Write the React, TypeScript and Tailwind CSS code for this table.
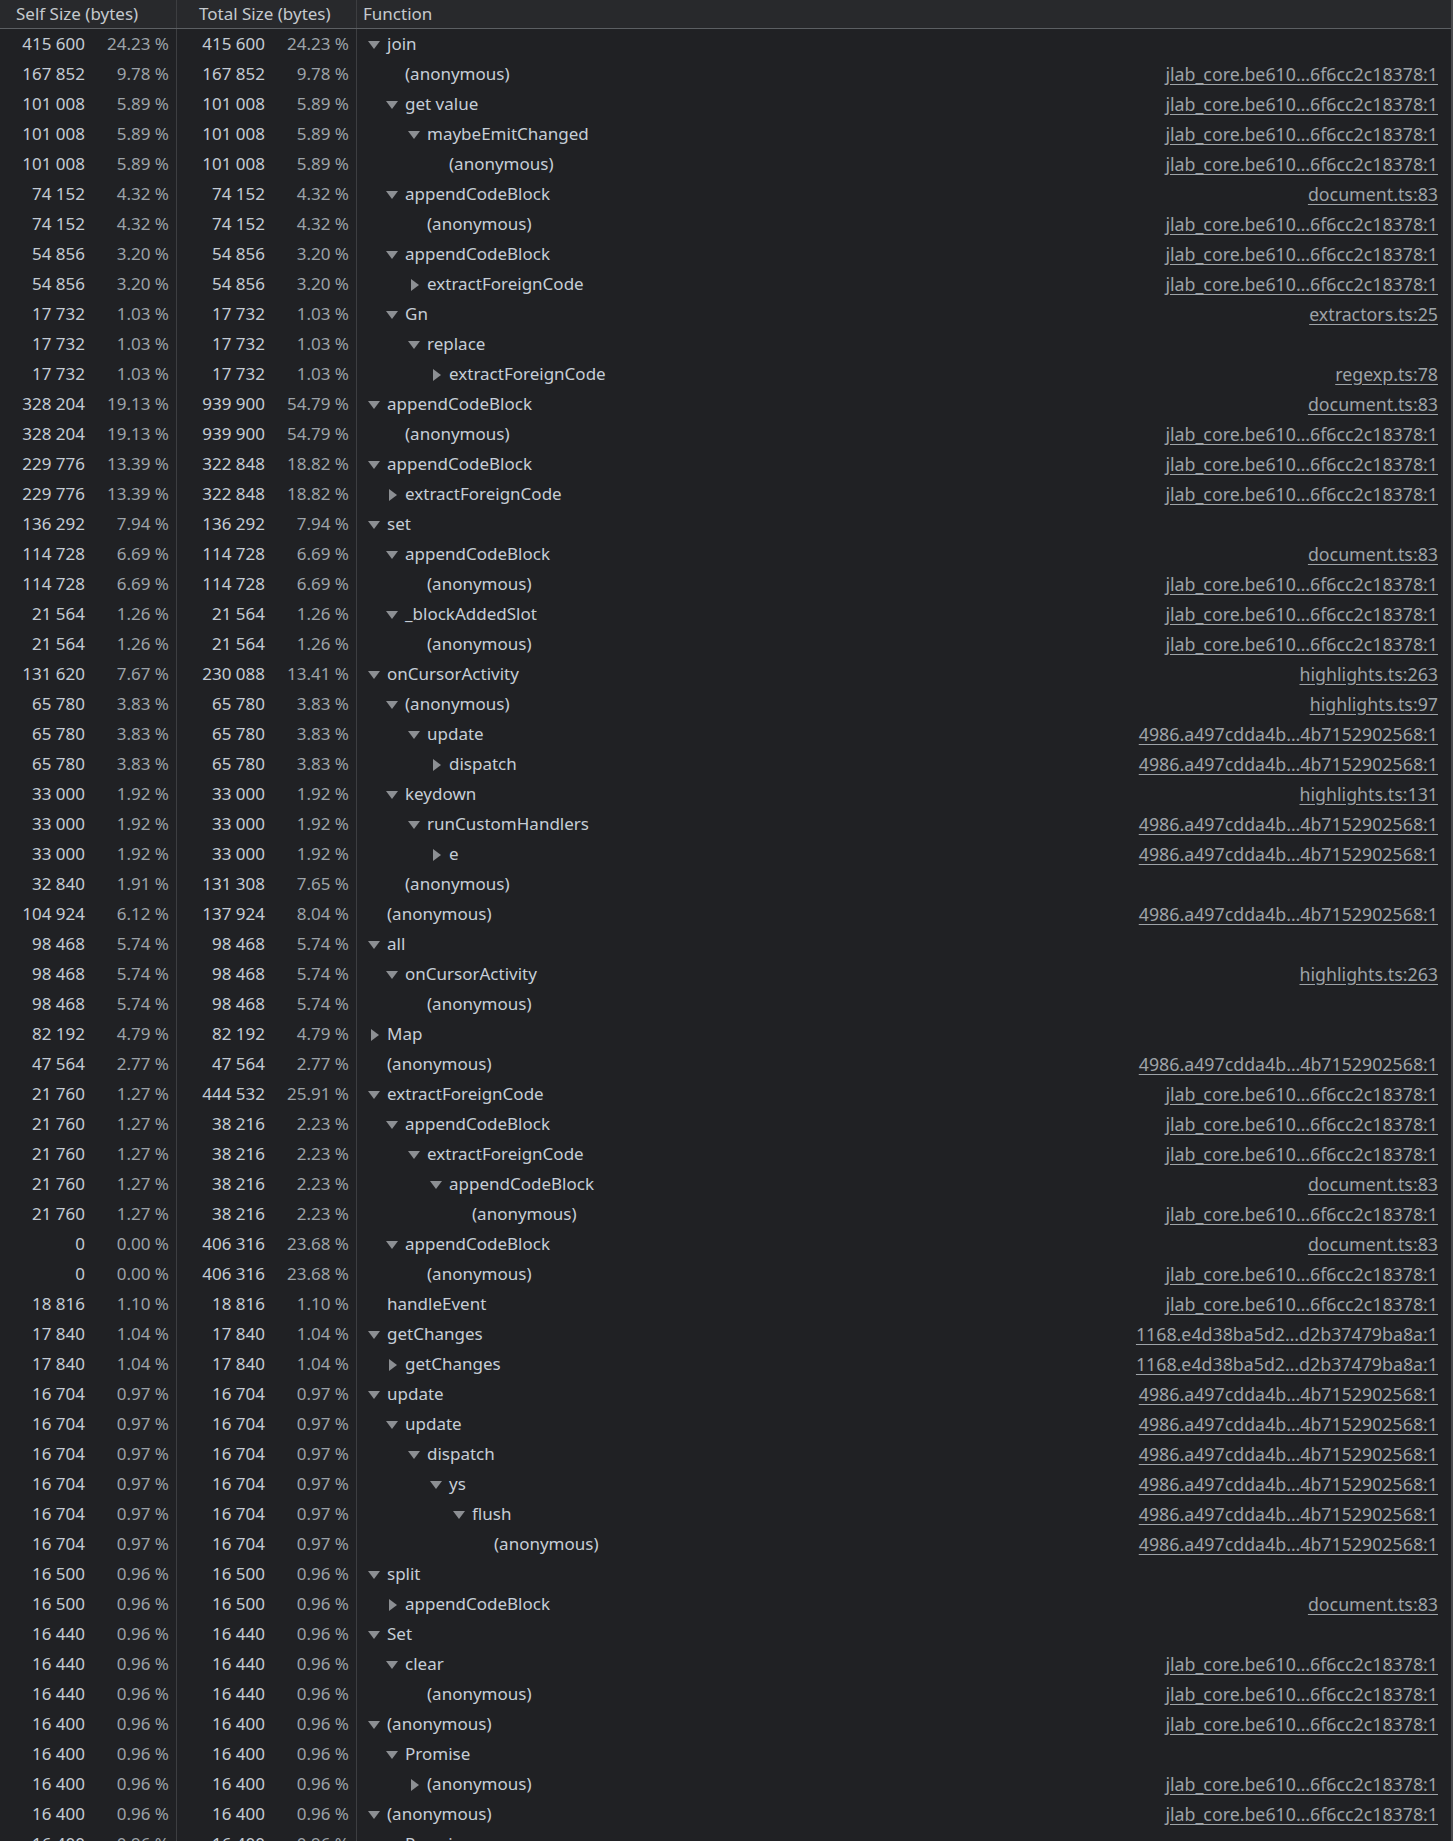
import React from 'react';

const J = 'jlab_core.be610…6f6cc2c18378:1';
const F = '4986.a497cdda4b…4b7152902568:1';
const C = '1168.e4d38ba5d2…d2b37479ba8a:1';
const D = 'document.ts:83';

type Toggle = 'd' | 'r' | '';
// self, self %, depth, toggle, name, link, total, total %
type Row = [string, string, number, Toggle, string, string, string?, string?];

const rows: Row[] = [
  ['415 600', '24.23 %', 0, 'd', 'join', ''],
  ['167 852', '9.78 %', 1, '', '(anonymous)', J],
  ['101 008', '5.89 %', 1, 'd', 'get value', J],
  ['101 008', '5.89 %', 2, 'd', 'maybeEmitChanged', J],
  ['101 008', '5.89 %', 3, '', '(anonymous)', J],
  ['74 152', '4.32 %', 1, 'd', 'appendCodeBlock', D],
  ['74 152', '4.32 %', 2, '', '(anonymous)', J],
  ['54 856', '3.20 %', 1, 'd', 'appendCodeBlock', J],
  ['54 856', '3.20 %', 2, 'r', 'extractForeignCode', J],
  ['17 732', '1.03 %', 1, 'd', 'Gn', 'extractors.ts:25'],
  ['17 732', '1.03 %', 2, 'd', 'replace', ''],
  ['17 732', '1.03 %', 3, 'r', 'extractForeignCode', 'regexp.ts:78'],
  ['328 204', '19.13 %', 0, 'd', 'appendCodeBlock', D, '939 900', '54.79 %'],
  ['328 204', '19.13 %', 1, '', '(anonymous)', J, '939 900', '54.79 %'],
  ['229 776', '13.39 %', 0, 'd', 'appendCodeBlock', J, '322 848', '18.82 %'],
  ['229 776', '13.39 %', 1, 'r', 'extractForeignCode', J, '322 848', '18.82 %'],
  ['136 292', '7.94 %', 0, 'd', 'set', ''],
  ['114 728', '6.69 %', 1, 'd', 'appendCodeBlock', D],
  ['114 728', '6.69 %', 2, '', '(anonymous)', J],
  ['21 564', '1.26 %', 1, 'd', '_blockAddedSlot', J],
  ['21 564', '1.26 %', 2, '', '(anonymous)', J],
  ['131 620', '7.67 %', 0, 'd', 'onCursorActivity', 'highlights.ts:263', '230 088', '13.41 %'],
  ['65 780', '3.83 %', 1, 'd', '(anonymous)', 'highlights.ts:97'],
  ['65 780', '3.83 %', 2, 'd', 'update', F],
  ['65 780', '3.83 %', 3, 'r', 'dispatch', F],
  ['33 000', '1.92 %', 1, 'd', 'keydown', 'highlights.ts:131'],
  ['33 000', '1.92 %', 2, 'd', 'runCustomHandlers', F],
  ['33 000', '1.92 %', 3, 'r', 'e', F],
  ['32 840', '1.91 %', 1, '', '(anonymous)', '', '131 308', '7.65 %'],
  ['104 924', '6.12 %', 0, '', '(anonymous)', F, '137 924', '8.04 %'],
  ['98 468', '5.74 %', 0, 'd', 'all', ''],
  ['98 468', '5.74 %', 1, 'd', 'onCursorActivity', 'highlights.ts:263'],
  ['98 468', '5.74 %', 2, '', '(anonymous)', ''],
  ['82 192', '4.79 %', 0, 'r', 'Map', ''],
  ['47 564', '2.77 %', 0, '', '(anonymous)', F],
  ['21 760', '1.27 %', 0, 'd', 'extractForeignCode', J, '444 532', '25.91 %'],
  ['21 760', '1.27 %', 1, 'd', 'appendCodeBlock', J, '38 216', '2.23 %'],
  ['21 760', '1.27 %', 2, 'd', 'extractForeignCode', J, '38 216', '2.23 %'],
  ['21 760', '1.27 %', 3, 'd', 'appendCodeBlock', D, '38 216', '2.23 %'],
  ['21 760', '1.27 %', 4, '', '(anonymous)', J, '38 216', '2.23 %'],
  ['0', '0.00 %', 1, 'd', 'appendCodeBlock', D, '406 316', '23.68 %'],
  ['0', '0.00 %', 2, '', '(anonymous)', J, '406 316', '23.68 %'],
  ['18 816', '1.10 %', 0, '', 'handleEvent', J],
  ['17 840', '1.04 %', 0, 'd', 'getChanges', C],
  ['17 840', '1.04 %', 1, 'r', 'getChanges', C],
  ['16 704', '0.97 %', 0, 'd', 'update', F],
  ['16 704', '0.97 %', 1, 'd', 'update', F],
  ['16 704', '0.97 %', 2, 'd', 'dispatch', F],
  ['16 704', '0.97 %', 3, 'd', 'ys', F],
  ['16 704', '0.97 %', 4, 'd', 'flush', F],
  ['16 704', '0.97 %', 5, '', '(anonymous)', F],
  ['16 500', '0.96 %', 0, 'd', 'split', ''],
  ['16 500', '0.96 %', 1, 'r', 'appendCodeBlock', D],
  ['16 440', '0.96 %', 0, 'd', 'Set', ''],
  ['16 440', '0.96 %', 1, 'd', 'clear', J],
  ['16 440', '0.96 %', 2, '', '(anonymous)', J],
  ['16 400', '0.96 %', 0, 'd', '(anonymous)', J],
  ['16 400', '0.96 %', 1, 'd', 'Promise', ''],
  ['16 400', '0.96 %', 2, 'r', '(anonymous)', J],
  ['16 400', '0.96 %', 0, 'd', '(anonymous)', J],
  ['16 400', '0.96 %', 1, 'd', 'Promise', ''],
];

// chrome's grid indents the first level less than the rest
const indent = ['pl-0', 'pl-[18px]', 'pl-[40px]', 'pl-[62px]', 'pl-[85px]', 'pl-[107px]'];

function Arrow({ dir }: { dir: Toggle }) {
  return (
    <span className="w-[19px] shrink-0 flex items-center">
      {dir === 'd' && (
        <svg width="12" height="8" viewBox="0 0 12 8" className="mt-[2px]">
          <path d="M0 0H12L6 8Z" fill="#8c8f93" />
        </svg>
      )}
      {dir === 'r' && (
        <svg width="8" height="12" viewBox="0 0 8 12" className="ml-[3px] mt-[1px]">
          <path d="M0 0L8 6L0 12Z" fill="#8c8f93" />
        </svg>
      )}
    </span>
  );
}

function SizeCell({ n, pct, w }: { n: string; pct: string; w: string }) {
  return (
    <div className={`${w} shrink-0 border-r border-[#3d3e41] flex justify-end pr-[7px]`}>
      <span className="text-[#c3cbd4]">{n}</span>
      <span className="w-[84px] text-right text-[#9da3a9]">{pct}</span>
    </div>
  );
}

export default function App() {
  return (
    <div
      className="h-[1841px] w-[1453px] overflow-hidden bg-[#202124] text-[17px] flex"
      style={{ fontFamily: '"Noto Sans", "Open Sans", sans-serif' }}
    >
      <div className="flex-1 flex flex-col">
        <div className="h-[29px] shrink-0 flex bg-[#28292c] border-b border-[#5c5f63] text-[#c5c9ce] leading-[28px]">
          <div className="w-[177px] shrink-0 border-r border-[#3d3e41] pl-[16px]">Self Size (bytes)</div>
          <div className="w-[180px] shrink-0 border-r border-[#3d3e41] pl-[22px]">Total Size (bytes)</div>
          <div className="flex-1 pl-[6px]">Function</div>
        </div>
        <div className="flex-1 flex flex-col">
          {rows.map((r, i) => {
            const [self, selfPct, depth, tog, name, link, total, totalPct] = r;
            return (
              <div key={i} className="h-[30px] shrink-0 flex leading-[30px] whitespace-nowrap">
                <SizeCell n={self} pct={selfPct} w="w-[177px]" />
                <SizeCell n={total ?? self} pct={totalPct ?? selfPct} w="w-[180px]" />
                <div className="flex-1 flex items-center pl-[11px] pr-[13px] min-w-0">
                  <div className={`${indent[depth]} flex items-center`}>
                    <Arrow dir={tog} />
                    <span className="text-[#c6ced7]">{name}</span>
                  </div>
                  {link && (
                    <span className="ml-auto text-[17.8px] text-[#9ea3a8] underline underline-offset-[3px] decoration-[#9ea3a8]">
                      {link}
                    </span>
                  )}
                </div>
              </div>
            );
          })}
        </div>
      </div>
      <div className="w-[2px] shrink-0 bg-[#4a4b4e]" />
    </div>
  );
}
